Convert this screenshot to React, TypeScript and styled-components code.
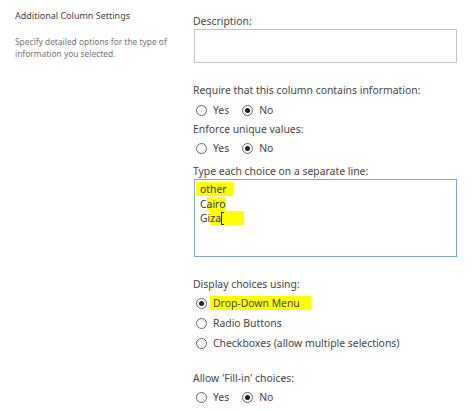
import React from "react";
import styled, { createGlobalStyle } from "styled-components";

const Global = createGlobalStyle`
  html, body { margin: 0; padding: 0; background: #fff; }
  body { font-family: "Segoe UI", "Noto Sans", "Open Sans", sans-serif; color: #444; }
`;

const Page = styled.div`
  display: flex;
  width: 474px;
  height: 411px;
  overflow: hidden;
`;

const Side = styled.div`
  width: 193px;
  padding: 9px 0 0 15px;
  box-sizing: border-box;
  flex-shrink: 0;
`;

const SideTitle = styled.div`
  font-size: 9px;
  line-height: 14px;
  color: #444;
  white-space: nowrap;
`;

const SideDesc = styled.div`
  margin-top: 13px;
  font-size: 8.4px;
  line-height: 11.5px;
  color: #777;
  white-space: nowrap;
`;

const Main = styled.div`
  width: 264px;
  padding-top: 13px;
  display: flex;
  flex-direction: column;
  font-size: 10.4px;
`;

const Label = styled.div<{ $top?: number; $lh?: number }>`
  margin-top: ${(p) => p.$top ?? 0}px;
  line-height: ${(p) => p.$lh ?? 18}px;
  white-space: nowrap;
`;

const Box = styled.div<{ $h: number; $focus?: boolean }>`
  margin-left: 1px;
  height: ${(p) => p.$h}px;
  border: 1px solid ${(p) => (p.$focus ? "#7ea7d8" : "#c4c4c4")};
  box-sizing: border-box;
  padding: 2px 0 0 5px;
  font-size: 10.4px;
  line-height: 14.5px;
  color: #333;
`;

const Line = styled.div`
  white-space: nowrap;
`;

const Mark = styled.span<{ $l?: number; $r?: number }>`
  background: #ffff00;
  padding: 0 ${(p) => p.$r ?? 0}px 0 ${(p) => p.$l ?? 0}px;
  margin-left: ${(p) => -(p.$l ?? 0)}px;
`;

const Caret = styled.span`
  display: inline-block;
  width: 3px;
  height: 13px;
  vertical-align: -3px;
  border-left: 1px solid #222;
  border-top: 1px solid #222;
  border-bottom: 1px solid #222;
  box-sizing: border-box;
`;

const RadioRow = styled.div<{ $gap?: number }>`
  display: flex;
  align-items: center;
  gap: ${(p) => p.$gap ?? 0}px;
  height: 20px;
  padding-left: 3px;
`;

const Option = styled.label`
  display: inline-flex;
  align-items: center;
  gap: 6px;
  white-space: nowrap;
`;

const Circle = styled.span<{ $on?: boolean }>`
  width: 11px;
  height: 11px;
  border: 1px solid #666;
  border-radius: 50%;
  box-sizing: border-box;
  display: inline-flex;
  align-items: center;
  justify-content: center;
  background: #fff;
  flex-shrink: 0;
  &::after {
    content: "";
    width: 5px;
    height: 5px;
    border-radius: 50%;
    background: ${(p) => (p.$on ? "#222" : "transparent")};
  }
`;

const YesNo: React.FC<{ yes?: boolean }> = ({ yes }) => (
  <RadioRow $gap={13}>
    <Option>
      <Circle $on={yes} />
      Yes
    </Option>
    <Option>
      <Circle $on={!yes} />
      No
    </Option>
  </RadioRow>
);

export default function App() {
  return (
    <>
      <Global />
      <Page>
        <Side>
          <SideTitle>Additional Column Settings</SideTitle>
          <SideDesc>
            Specify detailed options for the type of
            <br />
            information you selected.
          </SideDesc>
        </Side>
        <Main>
          <Label $lh={16}>Description:</Label>
          <Box $h={34} />
          <Label $top={18} $lh={19}>
            Require that this column contains information:
          </Label>
          <YesNo />
          <Label>Enforce unique values:</Label>
          <YesNo />
          <Label $top={5} $lh={16}>
            Type each choice on a separate line:
          </Label>
          <Box $h={78} $focus>
            <Line>
              <Mark $l={4} $r={7}>other</Mark>
            </Line>
            <Line>
              C<Mark $r={1}>airo</Mark>
            </Line>
            <Line>
              Gi<Mark $r={20}>za<Caret /></Mark>
            </Line>
          </Box>
          <Label $top={19} $lh={17}>
            Display choices using:
          </Label>
          <RadioRow>
            <Option>
              <Circle $on />
              <Mark $l={3} $r={11}>Drop-Down Menu</Mark>
            </Option>
          </RadioRow>
          <RadioRow>
            <Option>
              <Circle />
              Radio Buttons
            </Option>
          </RadioRow>
          <RadioRow>
            <Option>
              <Circle />
              Checkboxes (allow multiple selections)
            </Option>
          </RadioRow>
          <Label $top={16}>Allow 'Fill-in' choices:</Label>
          <YesNo />
        </Main>
      </Page>
    </>
  );
}
